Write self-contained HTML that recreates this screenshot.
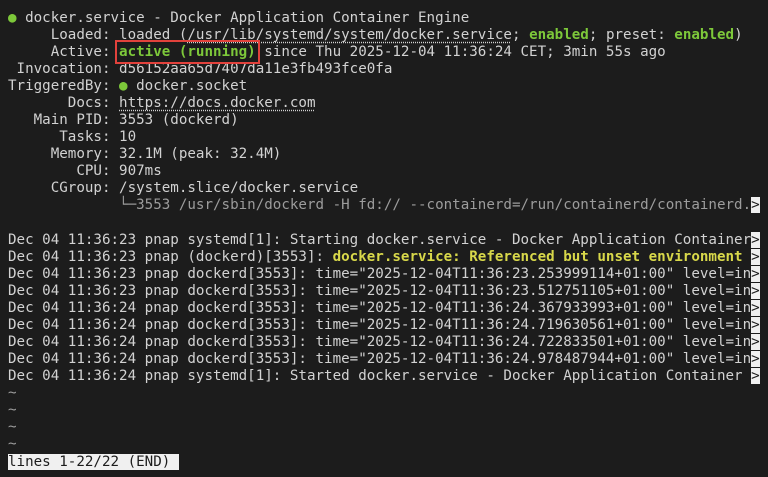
<!DOCTYPE html>
<html><head><meta charset="utf-8"><style>
html,body{margin:0;padding:0;background:#1c1c1c;width:768px;height:477px;overflow:hidden}
pre{margin:0;position:absolute;left:8px;top:9.5px;font-family:"DejaVu Sans Mono","Liberation Mono",monospace;font-size:14.2px;line-height:17.08px;color:#d2d2d2;white-space:pre}
.g{color:#7dc83a;font-weight:bold}
.y{color:#d8d84a;font-weight:bold}
.d{color:#9c9c9c}
.u{text-decoration:underline dotted;text-underline-offset:3px}
.r{color:#1c1c1c;background:#f0f0f0}
.box{outline:2px solid #e2423c;outline-offset:2px}
</style></head><body>
<pre><span class="g">●</span> docker.service - Docker Application Container Engine
     Loaded: loaded (<span class="u">/usr/lib/systemd/system/docker.service</span>; <span class="g">enabled</span>; preset: <span class="g">enabled</span>)
     Active: <span class="g box">active (running)</span> since Thu 2025-12-04 11:36:24 CET; 3min 55s ago
 Invocation: d56152aa65d7407da11e3fb493fce0fa
TriggeredBy: <span class="g">●</span> docker.socket
       Docs: <span class="u">https://docs.docker.com</span>
   Main PID: 3553 (dockerd)
      Tasks: 10
     Memory: 32.1M (peak: 32.4M)
        CPU: 907ms
     CGroup: /system.slice/docker.service
<span class="d">             └─3553 /usr/sbin/dockerd -H fd:// --containerd=/run/containerd/containerd.</span><span class="r">&gt;</span>

Dec 04 11:36:23 pnap systemd[1]: Starting docker.service - Docker Application Container<span class="r">&gt;</span>
Dec 04 11:36:23 pnap (dockerd)[3553]: <span class="y">docker.service: Referenced but unset environment</span> <span class="r">&gt;</span>
Dec 04 11:36:23 pnap dockerd[3553]: time="2025-12-04T11:36:23.253999114+01:00" level=in<span class="r">&gt;</span>
Dec 04 11:36:23 pnap dockerd[3553]: time="2025-12-04T11:36:23.512751105+01:00" level=in<span class="r">&gt;</span>
Dec 04 11:36:24 pnap dockerd[3553]: time="2025-12-04T11:36:24.367933993+01:00" level=in<span class="r">&gt;</span>
Dec 04 11:36:24 pnap dockerd[3553]: time="2025-12-04T11:36:24.719630561+01:00" level=in<span class="r">&gt;</span>
Dec 04 11:36:24 pnap dockerd[3553]: time="2025-12-04T11:36:24.722833501+01:00" level=in<span class="r">&gt;</span>
Dec 04 11:36:24 pnap dockerd[3553]: time="2025-12-04T11:36:24.978487944+01:00" level=in<span class="r">&gt;</span>
Dec 04 11:36:24 pnap systemd[1]: Started docker.service - Docker Application Container <span class="r">&gt;</span>
<span class="d">~</span>
<span class="d">~</span>
<span class="d">~</span>
<span class="d">~</span>
<span class="r">lines 1-22/22 (END) </span></pre>
</body></html>
